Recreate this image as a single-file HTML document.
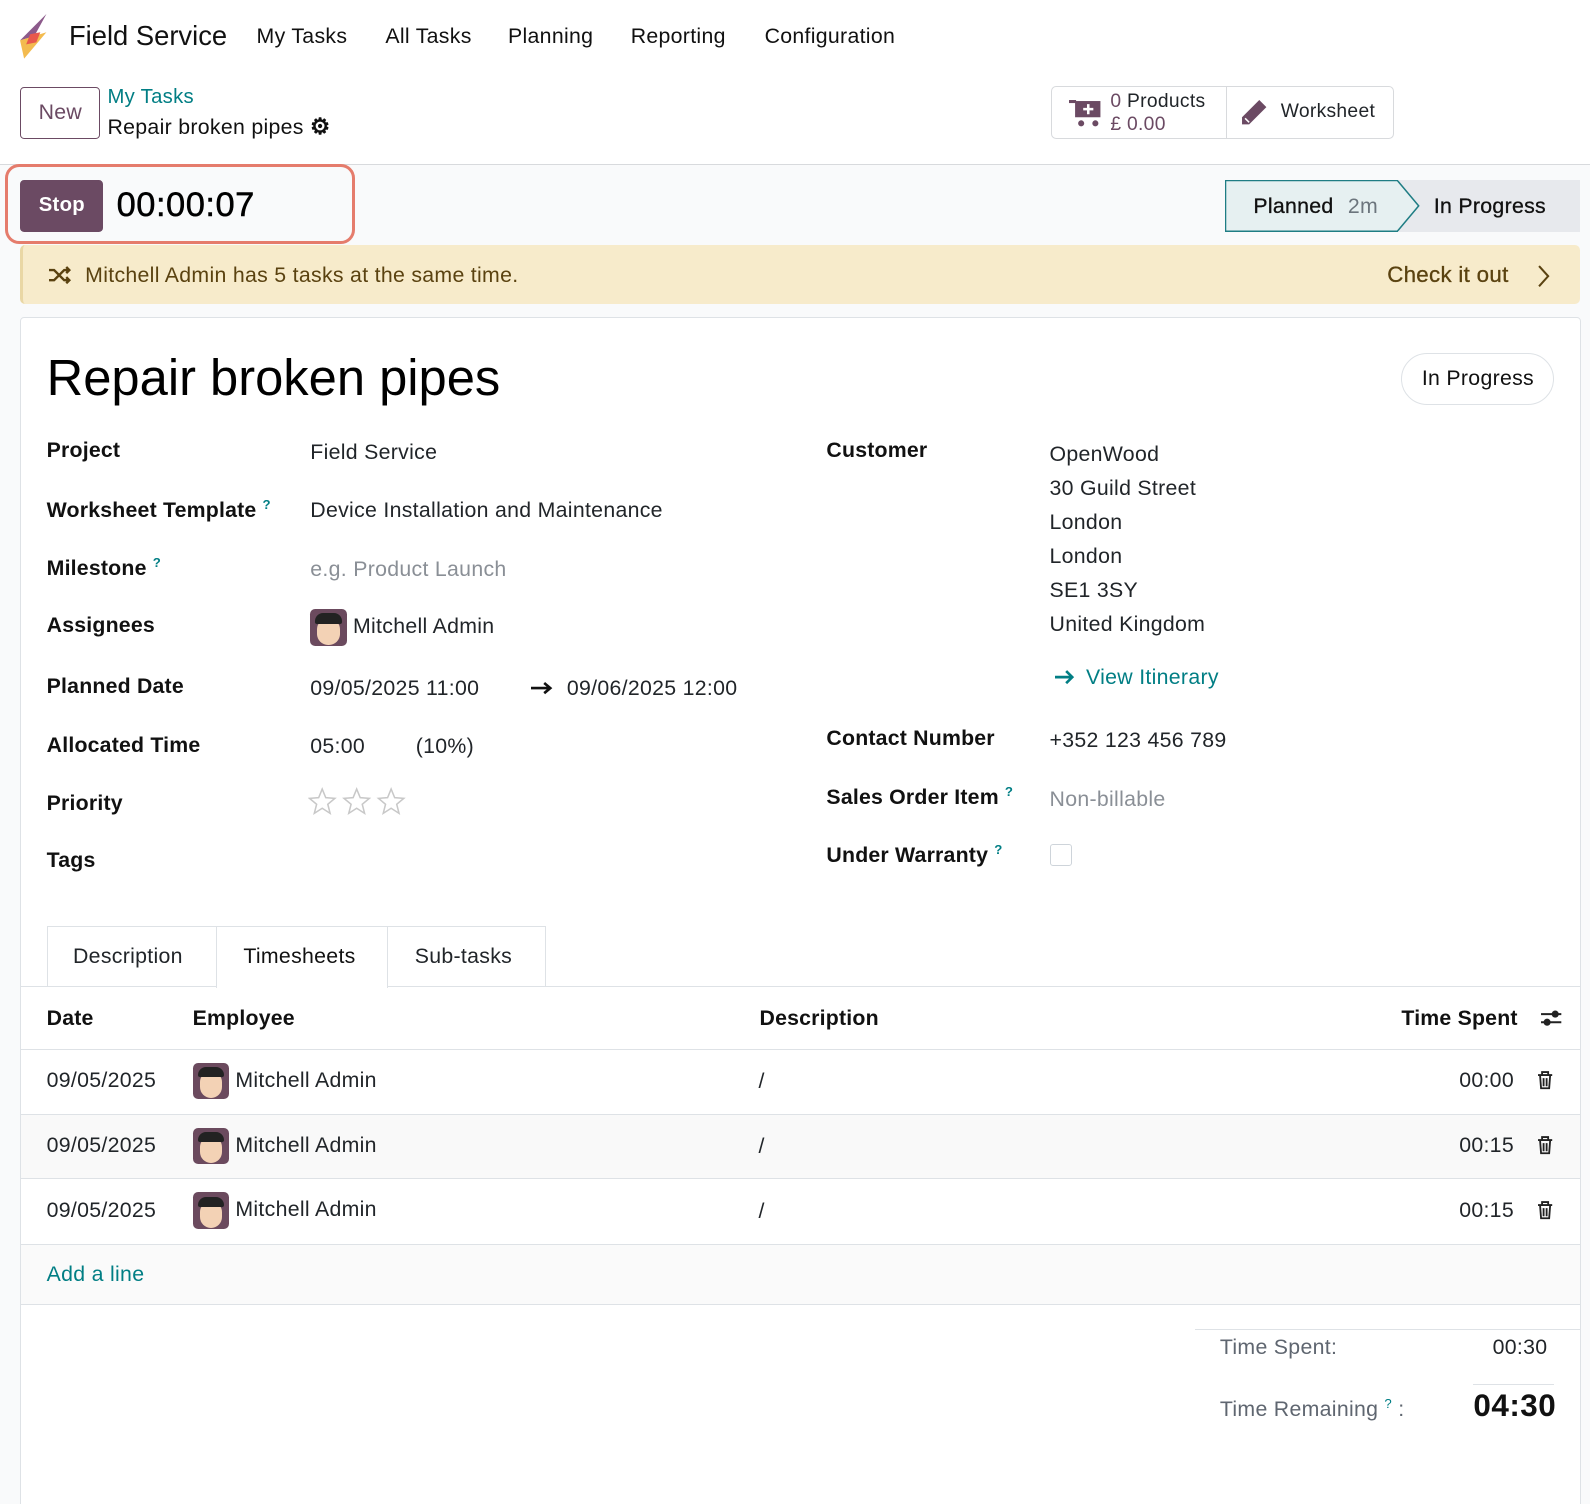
<!DOCTYPE html>
<html><head><meta charset="utf-8"><style>
*{box-sizing:border-box;margin:0;padding:0}
html,body{width:1590px;height:1504px;overflow:hidden;background:#f9fafb}
#w{zoom:1.01403;position:relative;width:1568px;height:1483px;font-family:"Liberation Sans",sans-serif;color:#212529;font-size:21px;letter-spacing:0.3px}
.a{position:absolute;white-space:nowrap}
.lbl{font-weight:bold;color:#111;letter-spacing:0.2px}
.q{color:#017e84;font-size:13px;vertical-align:super;margin-left:6px}
.teal{color:#017e84}
.mut{color:#8a8f96}
.av{display:inline-block;width:36px;height:36px;border-radius:5px;background:#6b4a5e;vertical-align:middle;position:relative;overflow:hidden}
.av:after{content:"";position:absolute;left:7px;top:9px;width:22px;height:26px;border-radius:10px 10px 11px 11px;background:#f3d2b5}
.av:before{content:"";position:absolute;left:5px;top:4px;width:26px;height:10px;border-radius:8px 8px 2px 2px;background:#222;z-index:2}
</style></head><body><div id="w">
<svg width="0" height="0" style="position:absolute"><defs><symbol id="tr" viewBox="0 0 16 20"><path d="M1 5h14M5 5V2h6v3M3 5l1 13h8l1-13M6.5 8v8M9.5 8v8" fill="none" stroke="#222" stroke-width="1.8"/></symbol></defs></svg>
<div class="a" style="left:0;top:0;width:1568px;height:163px;background:#fff;border-bottom:1px solid #d8dadd"></div>
<svg class="a" style="left:16px;top:14px" width="36" height="44" viewBox="0 0 36 44"><polygon points="30,0 18,22 4,26" fill="#8c5a8b"/><polygon points="4,26 30,18 8,44" fill="#f3bb4f"/><polygon points="14,20 24,18 20,28 10,30" fill="#e8584d"/></svg>
<div class="a" style="left:68px;top:20px;font-size:27px;color:#111;letter-spacing:0">Field Service</div>
<div class="a" style="left:253px;top:24px;color:#111">My Tasks</div>
<div class="a" style="left:380px;top:24px;color:#111">All Tasks</div>
<div class="a" style="left:501px;top:24px;color:#111">Planning</div>
<div class="a" style="left:622px;top:24px;color:#111">Reporting</div>
<div class="a" style="left:754px;top:24px;color:#111">Configuration</div>
<div class="a" style="left:20px;top:86px;width:79px;height:51px;border:1px solid #6b4a63;border-radius:4px;color:#6b4a63;font-size:21px;text-align:center;line-height:49px">New</div>
<div class="a teal" style="left:106px;top:85px;font-size:20px">My Tasks</div>
<div class="a" style="left:106px;top:112px;font-size:21px;color:#111">Repair broken pipes <span style="font-size:22px;font-weight:bold">⚙</span></div>
<div class="a" style="left:1036px;top:85px;width:339px;height:52px;border:1px solid #d8dadd;border-radius:5px;background:#fff"></div>
<div class="a" style="left:1209px;top:86px;width:1px;height:50px;background:#d8dadd"></div>
<svg class="a" style="left:1054px;top:97px" width="32" height="30" viewBox="0 0 32 30"><rect x="6" y="3" width="25" height="16" fill="#6b4a63"/><rect x="0" y="2" width="7" height="3" fill="#6b4a63"/><circle cx="12" cy="25" r="3" fill="#6b4a63"/><circle cx="26" cy="25" r="3" fill="#6b4a63"/><path d="M19 6v10M14 11h10" stroke="#fff" stroke-width="2.5"/></svg>
<div class="a" style="left:1095px;top:90px;font-size:19px;line-height:22px"><span style="color:#6b4a63">0</span> Products<br><span style="color:#6b4a63">£ 0.00</span></div>
<svg class="a" style="left:1222px;top:96px" width="30" height="30" viewBox="0 0 30 30"><path d="M20 3l7 7L10 27H3v-7z" fill="#6b4a63"/><path d="M6 21l4 4" stroke="#fff" stroke-width="1.5"/></svg>
<div class="a" style="left:1263px;top:100px;font-size:19px">Worksheet</div>
<div class="a" style="left:5px;top:162px;width:345px;height:79px;border:3px solid #e57c6c;border-radius:14px"></div>
<div class="a" style="left:20px;top:178px;width:82px;height:51px;background:#6b4a63;border-radius:4px;color:#fff;font-weight:bold;font-size:20px;text-align:center;line-height:51px">Stop</div>
<div class="a" style="left:115px;top:183px;font-size:34px;color:#000;letter-spacing:0.5px;-webkit-text-stroke:0.5px #000">00:00:07</div>
<div class="a" style="left:1380px;top:178px;width:178px;height:51px;background:#e7e9ed"></div>
<svg class="a" style="left:1208px;top:178px" width="192" height="51"><polygon points="0.5,0.5 170,0.5 191,25.5 170,50.5 0.5,50.5" fill="#e6f0f1" stroke="#1f7d84" stroke-width="1.5"/></svg>
<div class="a" style="left:1236px;top:191px;font-size:21px;color:#111;-webkit-text-stroke:0.3px #111">Planned <span style="color:#6c757d;margin-left:8px;-webkit-text-stroke:0">2m</span></div>
<div class="a" style="left:1414px;top:191px;font-size:21px;color:#111;-webkit-text-stroke:0.3px #111">In Progress</div>
<div class="a" style="left:20px;top:242px;width:1538px;height:58px;background:#f7ebcb;border-left:3px solid #e9d7a5;border-radius:5px"></div>
<svg class="a" style="left:47px;top:261px" width="24" height="20" viewBox="0 0 24 20"><path d="M1 5h5l10 10h5M1 15h5l10-10h5M18 2l3 3-3 3M18 12l3 3-3 3" fill="none" stroke="#5a4210" stroke-width="2.4"/></svg>
<div class="a" style="left:84px;top:259px;font-size:21px;color:#5a4210">Mitchell Admin has 5 tasks at the same time.</div>
<div class="a" style="left:1368px;top:258px;font-size:22px;color:#5a4210;-webkit-text-stroke:0.3px #5a4210">Check it out</div>
<svg class="a" style="left:1515px;top:260px" width="16" height="24"><path d="M3 2l9 10-9 10" fill="none" stroke="#5a4210" stroke-width="2"/></svg>
<div class="a" style="left:20px;top:313px;width:1539px;height:1180px;background:#fff;border:1px solid #dee2e6;border-radius:4px"></div>
<div class="a" style="left:46px;top:343px;font-size:50px;color:#000;letter-spacing:0">Repair broken pipes</div>
<div class="a" style="left:1382px;top:348px;width:151px;height:51px;border:1px solid #dee2e6;border-radius:26px;text-align:center;line-height:49px;font-size:21px;color:#111">In Progress</div>
<div class="a lbl" style="left:46px;top:432px">Project</div><div class="a" style="left:306px;top:434px">Field Service</div>
<div class="a lbl" style="left:46px;top:490px">Worksheet Template<span class="q">?</span></div><div class="a" style="left:306px;top:491px">Device Installation and Maintenance</div>
<div class="a lbl" style="left:46px;top:547px">Milestone<span class="q">?</span></div><div class="a mut" style="left:306px;top:549px">e.g. Product Launch</div>
<div class="a lbl" style="left:46px;top:605px">Assignees</div><div class="a" style="left:306px;top:601px"><span class="av"></span> Mitchell Admin</div>
<div class="a lbl" style="left:46px;top:665px">Planned Date</div><div class="a" style="left:306px;top:667px">09/05/2025 11:00</div>
<svg class="a" style="left:523px;top:671px" width="24" height="16"><path d="M1 8h18M14 3l6 5-6 5" fill="none" stroke="#111" stroke-width="2.6"/></svg>
<div class="a" style="left:559px;top:667px">09/06/2025 12:00</div>
<div class="a lbl" style="left:46px;top:723px">Allocated Time</div><div class="a" style="left:306px;top:724px">05:00</div><div class="a" style="left:410px;top:724px">(10%)</div>
<div class="a lbl" style="left:46px;top:780px">Priority</div>
<svg class="a" style="left:304px;top:776px" width="100" height="30" viewBox="0 0 100 30"><g fill="none" stroke="#c8c8c8" stroke-width="1.5"><path id="st" d="M14 2l3.5 8.5 9 .7-7 5.8 2.3 9L14 21l-7.8 5 2.3-9-7-5.8 9-.7z"/><use href="#st" x="34"/><use href="#st" x="68"/></g></svg>
<div class="a lbl" style="left:46px;top:836px">Tags</div>
<div class="a lbl" style="left:815px;top:432px">Customer</div>
<div class="a" style="left:1035px;top:432px;line-height:33.5px">OpenWood<br>30 Guild Street<br>London<br>London<br>SE1 3SY<br>United Kingdom</div>
<svg class="a" style="left:1039px;top:659px" width="22" height="18"><path d="M1 9h17M12 3l6 6-6 6" fill="none" stroke="#017e84" stroke-width="2.6"/></svg>
<div class="a teal" style="left:1071px;top:656px">View Itinerary</div>
<div class="a lbl" style="left:815px;top:716px">Contact Number</div><div class="a" style="left:1035px;top:718px">+352 123 456 789</div>
<div class="a lbl" style="left:815px;top:773px">Sales Order Item<span class="q">?</span></div><div class="a mut" style="left:1035px;top:776px">Non-billable</div>
<div class="a lbl" style="left:815px;top:830px">Under Warranty<span class="q">?</span></div>
<div class="a" style="left:1035px;top:832px;width:22px;height:22px;border:1px solid #ced4da;border-radius:3px"></div>
<div class="a" style="left:21px;top:972px;width:1537px;height:1px;background:#dee2e6"></div>
<div class="a" style="left:46px;top:913px;width:492px;height:60px;border:1px solid #dee2e6;border-bottom:none"></div>
<div class="a" style="left:213px;top:913px;width:170px;height:61px;border:1px solid #dee2e6;border-bottom:none;background:#fff"></div>
<div class="a" style="left:72px;top:931px">Description</div>
<div class="a" style="left:240px;top:931px;color:#111">Timesheets</div>
<div class="a" style="left:409px;top:931px">Sub-tasks</div>
<div class="a lbl" style="left:46px;top:992px">Date</div>
<div class="a lbl" style="left:190px;top:992px">Employee</div>
<div class="a lbl" style="left:749px;top:992px">Description</div>
<div class="a lbl" style="left:1382px;top:992px">Time Spent</div>
<svg class="a" style="left:1518px;top:993px" width="24" height="22"><path d="M2 7h20M2 15h20" stroke="#222" stroke-width="2"/><circle cx="16" cy="7" r="3.5" fill="#222"/><circle cx="8" cy="15" r="3.5" fill="#222"/></svg>
<div class="a" style="left:21px;top:1034px;width:1537px;height:1px;background:#dee2e6"></div>
<div class="a" style="left:21px;top:1099px;width:1537px;height:64px;background:#f9f9f9;border-top:1px solid #dee2e6;border-bottom:1px solid #dee2e6"></div>
<div class="a" style="left:21px;top:1227px;width:1537px;height:60px;background:#fafafa;border-top:1px solid #dee2e6;border-bottom:1px solid #dee2e6"></div>
<div class="a" style="left:46px;top:1053px">09/05/2025</div><div class="a" style="left:190px;top:1048px"><span class="av"></span> Mitchell Admin</div><div class="a" style="left:748px;top:1054px">/</div><div class="a" style="left:1439px;top:1053px">00:00</div><svg class="a" style="left:1516px;top:1055px" width="16" height="20"><use href="#tr"/></svg>
<div class="a" style="left:46px;top:1117px">09/05/2025</div><div class="a" style="left:190px;top:1112px"><span class="av"></span> Mitchell Admin</div><div class="a" style="left:748px;top:1118px">/</div><div class="a" style="left:1439px;top:1117px">00:15</div><svg class="a" style="left:1516px;top:1119px" width="16" height="20"><use href="#tr"/></svg>
<div class="a" style="left:46px;top:1181px">09/05/2025</div><div class="a" style="left:190px;top:1176px"><span class="av"></span> Mitchell Admin</div><div class="a" style="left:748px;top:1182px">/</div><div class="a" style="left:1439px;top:1181px">00:15</div><svg class="a" style="left:1516px;top:1183px" width="16" height="20"><use href="#tr"/></svg>
<div class="a teal" style="left:46px;top:1245px">Add a line</div>
<div class="a" style="left:1178px;top:1311px;width:380px;height:1px;background:#dee2e6"></div>
<div class="a" style="left:1203px;top:1317px;color:#5f6670">Time Spent:</div><div class="a" style="left:1472px;top:1317px">00:30</div>
<div class="a" style="left:1453px;top:1365px;width:80px;height:1px;background:#dee2e6"></div>
<div class="a" style="left:1203px;top:1377px;color:#5f6670">Time Remaining<span class="q">?</span> :</div>
<div class="a" style="left:1453px;top:1369px;font-size:31px;font-weight:bold;color:#111;letter-spacing:0.5px">04:30</div>
</div></body></html>
